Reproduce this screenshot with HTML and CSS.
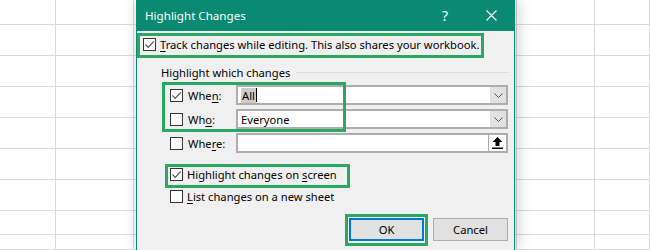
FILE: index.html
```html
<!DOCTYPE html>
<html lang="en">

<head>

  <meta charset="utf-8">

  <title>Highlight Changes</title>

  <link rel="stylesheet" href="styles.css">
</head>

<body>

  <div class="sheet">
    <div class="cell"></div><div class="cell"></div><div class="cell"></div><div class="cell"></div><div class="cell"></div>
    <div class="cell"></div><div class="cell"></div><div class="cell"></div><div class="cell"></div><div class="cell"></div>
    <div class="cell"></div><div class="cell"></div><div class="cell"></div><div class="cell"></div><div class="cell"></div>
    <div class="cell"></div><div class="cell"></div><div class="cell"></div><div class="cell"></div><div class="cell"></div>
    <div class="cell"></div><div class="cell"></div><div class="cell"></div><div class="cell"></div><div class="cell"></div>
    <div class="cell"></div><div class="cell"></div><div class="cell"></div><div class="cell"></div><div class="cell"></div>
    <div class="cell"></div><div class="cell"></div><div class="cell"></div><div class="cell"></div><div class="cell"></div>
    <div class="cell"></div><div class="cell"></div><div class="cell"></div><div class="cell"></div><div class="cell"></div>
    <div class="cell"></div><div class="cell"></div><div class="cell"></div><div class="cell"></div><div class="cell"></div>
  </div>

  <div class="dialog">
    <div class="titlebar">
      <span class="title">Highlight Changes</span>
      <span class="tbtn">?</span>
      <span class="tbtn">
        <svg width="11" height="11" viewBox="0 0 11 11">
          <path d="M0.5 0.5 L10.5 10.5 M10.5 0.5 L0.5 10.5" stroke="white" stroke-width="1.1" fill="none"></path>
        </svg>
      </span>
    </div>

    <div class="content">
      <div class="row">
        <span class="box">
          <svg width="11" height="11" viewBox="0 0 11 11"><path d="M1.5 5.5 L4.2 8.3 L9.8 2.4" stroke="#555" stroke-width="1.2" fill="none"></path></svg>
        </span>
        <span><u>T</u>rack changes while editing. This also shares your workbook.</span>
      </div>

      <div class="group">
        <div class="legend">
          <span>Highlight which changes</span>
          <span class="rule"></span>
        </div>

        <div class="field">
          <span class="box">
            <svg width="11" height="11" viewBox="0 0 11 11"><path d="M1.5 5.5 L4.2 8.3 L9.8 2.4" stroke="#555" stroke-width="1.2" fill="none"></path></svg>
          </span>
          <span class="label">Whe<u>n</u>:</span>
          <div class="combo">
            <span class="value"><span class="selected">All</span><span class="caret"></span></span>
            <span class="drop">
              <svg width="9" height="5" viewBox="0 0 9 5"><path d="M0.5 0.5 L4.5 4.5 L8.5 0.5" stroke="#555" stroke-width="1" fill="none"></path></svg>
            </span>
          </div>
        </div>

        <div class="field">
          <span class="box"></span>
          <span class="label">Wh<u>o</u>:</span>
          <div class="combo">
            <span class="value">Everyone</span>
            <span class="drop">
              <svg width="9" height="5" viewBox="0 0 9 5"><path d="M0.5 0.5 L4.5 4.5 L8.5 0.5" stroke="#555" stroke-width="1" fill="none"></path></svg>
            </span>
          </div>
        </div>

        <div class="field">
          <span class="box"></span>
          <span class="label">Whe<u>r</u>e:</span>
          <div class="combo">
            <span class="value"></span>
            <span class="pick">
              <svg width="11" height="12" viewBox="0 0 11 12">
                <path d="M5.5 0 L10.5 5 L7.5 5 L7.5 9 L3.5 9 L3.5 5 L0.5 5 Z" fill="#000"></path>
                <rect x="0" y="10.5" width="11" height="1.5" fill="#000"></rect>
              </svg>
            </span>
          </div>
        </div>
      </div>

      <div class="row option">
        <span class="box">
          <svg width="11" height="11" viewBox="0 0 11 11"><path d="M1.5 5.5 L4.2 8.3 L9.8 2.4" stroke="#555" stroke-width="1.2" fill="none"></path></svg>
        </span>
        <span>Highlight changes on <u>s</u>creen</span>
      </div>

      <div class="row option">
        <span class="box"></span>
        <span><u>L</u>ist changes on a new sheet</span>
      </div>

      <div class="buttons">
        <button class="btn btn-default">OK</button>
        <button class="btn">Cancel</button>
      </div>
    </div>
  </div>

  <!-- annotation boxes drawn over the dialog -->
  <div class="mark mark-track"></div>
  <div class="mark mark-who"></div>
  <div class="mark mark-screen"></div>
  <div class="mark mark-ok"></div>

</body>

</html>
```

FILE: styles.css
```css
body {
  margin: 0;
  width: 650px;
  height: 250px;
  overflow: hidden;
  position: relative;
  background: #fff;
  font-family: "Noto Sans", "Open Sans", sans-serif;
  font-size: 11.2px;
  color: #000;
}

u {
  text-decoration-thickness: 1px;
  text-underline-offset: 2px;
}

.sheet {
  display: grid;
  grid-template-columns: 56px 78px 383px 78px 1fr;
  grid-template-rows: 25px 31px 31px 31px 31px 31px 31px 24px 1fr;
  height: 250px;
}

.cell {
  border-right: 1px solid #dadada;
  border-bottom: 1px solid #dadada;
}

.dialog {
  position: absolute;
  left: 136px;
  top: 0;
  width: 379px;
  height: 250px;
  box-sizing: border-box;
  background: #f0f0f0;
  border-left: 1px solid #0a8a72;
  border-right: 1px solid #0a8a72;
  box-shadow: 2px 0 14px rgba(0, 0, 0, 0.22);
}

.titlebar {
  height: 31px;
  background: #0a8a72;
  color: #fff;
  display: flex;
  align-items: center;
}

.title {
  flex: 1;
  padding-left: 8px;
  font-size: 11.6px;
}

.tbtn {
  width: 46px;
  height: 31px;
  display: flex;
  align-items: center;
  justify-content: center;
  font-size: 14px;
}

.content {
  display: flex;
  flex-direction: column;
  padding: 0 5px 0 6px;
}

.row {
  display: flex;
  align-items: center;
  gap: 4px;
  height: 17px;
  margin-top: 5px;
}

.box {
  width: 13px;
  height: 13px;
  box-sizing: border-box;
  border: 1px solid #333;
  background: #fff;
  display: flex;
  align-items: center;
  justify-content: center;
  flex: none;
}

.group {
  margin: 11px 0 0 18px;
}

.legend {
  display: flex;
  align-items: center;
  height: 16px;
}

.rule {
  flex: 1;
  border-top: 1px solid #dcdcdc;
  margin-left: 6px;
}

.field {
  display: flex;
  align-items: center;
  height: 20px;
  margin-top: 4px;
  padding-left: 9px;
  padding-right: 1px;
}

.legend + .field {
  margin-top: 5px;
}

.label {
  width: 48px;
  margin-left: 5px;
}

.combo {
  flex: 1;
  height: 20px;
  box-sizing: border-box;
  border: 2px solid #adadad;
  background: #fff;
  display: flex;
}

.value {
  flex: 1;
  display: flex;
  align-items: center;
  padding-left: 3px;
}

.selected {
  background: #cccccc;
  padding: 0 1px;
  line-height: 15px;
}

.caret {
  width: 1px;
  height: 14px;
  background: #000;
}

.drop {
  width: 16px;
  background: #e1e1e1;
  display: flex;
  align-items: center;
  justify-content: center;
}

.pick {
  width: 17px;
  border-left: 1px solid #adadad;
  background: #fff;
  display: flex;
  align-items: center;
  justify-content: center;
}

.option {
  margin-left: 27px;
}

.option:nth-child(3) {
  margin-top: 13px;
}

.buttons {
  display: flex;
  justify-content: flex-end;
  gap: 9px;
  margin-top: 13px;
  padding-right: 1px;
}

.btn {
  width: 75px;
  height: 23px;
  box-sizing: border-box;
  border: 1px solid #adadad;
  background: #e1e1e1;
  font-family: inherit;
  font-size: 11.2px;
  color: #000;
  padding: 0;
}

.btn-default {
  border: 2px solid #0078d7;
}

.mark {
  position: absolute;
  box-sizing: border-box;
  border: 3px solid #2aa760;
}

.mark-track {
  left: 137px;
  top: 33px;
  width: 347px;
  height: 25px;
}

.mark-who {
  left: 162px;
  top: 82px;
  width: 184px;
  height: 50px;
}

.mark-screen {
  left: 165px;
  top: 164px;
  width: 185px;
  height: 24px;
}

.mark-ok {
  left: 345px;
  top: 214px;
  width: 83px;
  height: 32px;
}
```
